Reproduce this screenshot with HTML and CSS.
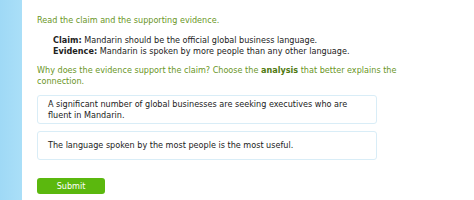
FILE: index.html
```html
<!DOCTYPE html>
<html lang="en">
<head>
    <meta charset="UTF-8">
    <meta name="viewport" content="width=device-width, initial-scale=1.0">
    <title>Claim and Evidence</title>
    <link rel="stylesheet" href="styles.css">
</head>
<body>
    <div class="page">
        <div class="sidebar"></div>

        <div class="main">
            <p class="prompt">Read the claim and the supporting evidence.</p>

            <!-- Claim and evidence -->
            <div class="evidence">
                <p><strong>Claim:</strong> Mandarin should be the official global business language.</p>
                <p><strong>Evidence:</strong> Mandarin is spoken by more people than any other language.</p>
            </div>

            <p class="prompt question">Why does the evidence support the claim? Choose the <strong>analysis</strong> that better explains the connection.</p>

            <!-- Answer choices -->
            <div class="options">
                <div class="option">A significant number of global businesses are seeking executives who are fluent in Mandarin.</div>
                <div class="option">The language spoken by the most people is the most useful.</div>
            </div>

            <button class="submit">Submit</button>
        </div>
    </div>
</body>
</html>
```

FILE: styles.css
```css
/* General Styling */
body { margin: 0; font-family: "DejaVu Sans", Verdana, sans-serif; font-size: 8.1px; line-height: 11px; color: #222; background-color: #fff; }
p { margin: 0; }
.page { display: flex; min-height: 200px; }
.sidebar { width: 22px; flex-shrink: 0; background: linear-gradient(to right, #9fd9f6, #aadff8); }
.main { padding: 15px 0 0 15px; }

/* Prompt Styling */
.prompt { color: #6a961f; }
.prompt strong { color: #4f7a10; }
.question { margin-top: 8px; width: 372px; }

/* Claim and Evidence */
.evidence { margin: 9px 0 0 16px; }

/* Answer Choices */
.options { margin-top: 8px; width: 340px; display: flex; flex-direction: column; gap: 7px; }
.option { display: flex; align-items: center; box-sizing: border-box; min-height: 29px; padding: 2px 10px; border: 1px solid #d9edf7; border-radius: 3px; }

/* Submit Button */
.submit { margin-top: 18px; width: 68px; height: 16px; padding: 0; border: none; border-radius: 3px; background-color: #5bb80e; color: #fff; font-family: "DejaVu Sans", Verdana, sans-serif; font-size: 8.1px; cursor: pointer; }
```
